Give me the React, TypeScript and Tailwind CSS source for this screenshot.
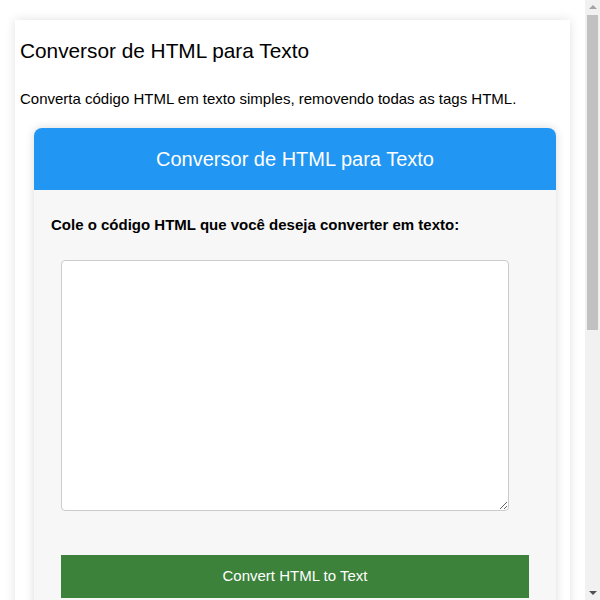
import { useState } from "react";

// Conversor de HTML para Texto — página simples com cartão e textarea.
function stripHtml(html: string) {
  const doc = new DOMParser().parseFromString(html, "text/html");
  return doc.body.textContent || "";
}

// barra de rolagem desenhada (o navegador headless esconde a nativa)
function FakeScrollbar() {
  return (
    <div className="fixed top-0 right-0 flex h-screen w-[15px] flex-col items-center bg-[#f1f1f1]">
      <div className="mt-[5px] h-0 w-0 border-x-[4px] border-b-[4px] border-x-transparent border-b-[#a3a3a3]" />
      <div className="mt-[6px] h-[315px] w-[11px] bg-[#c1c1c1]" />
      <div className="flex-1" />
      <div className="mb-[5px] h-0 w-0 border-x-[4px] border-t-[4px] border-x-transparent border-t-[#505050]" />
    </div>
  );
}

export default function App() {
  const [html, setHtml] = useState("");
  const [text, setText] = useState("");

  return (
    <div className="min-h-screen bg-white pt-[20px] pb-[25px] font-['Arial','Liberation_Sans',sans-serif] text-black">
      <div className="ml-[15px] w-[555px] bg-white pt-[19px] pb-[20px] shadow-[0_0_10px_rgba(0,0,0,0.12)]">
        <h1 className="pl-[5px] text-[20.8px] leading-[24px] font-normal">Conversor de HTML para Texto</h1>
        <p className="mt-[27px] pl-[5px] text-[15px] leading-[18px]">
          Converta código HTML em texto simples, removendo todas as tags HTML.
        </p>

        <div className="mt-[20px] ml-[19px] w-[522px] overflow-hidden rounded-[8px] bg-[#f7f7f7] shadow-[0_0_10px_rgba(0,0,0,0.15)]">
          <div className="flex h-[62px] items-center justify-center bg-[#2196F3] text-[20px] text-white">
            Conversor de HTML para Texto
          </div>

          <div className="px-[17px] pt-[26px] pb-[34px]">
            <label className="block text-[15px] leading-[18px] font-bold">
              Cole o código HTML que você deseja converter em texto:
            </label>
            <textarea
              value={html}
              onChange={e => setHtml(e.target.value)}
              className="mt-[26px] ml-[10px] block h-[251px] w-[448px] rounded-[4px] border border-[#ccc] bg-white p-[10px] text-[14px] outline-none"
            />
            <button
              onClick={() => setText(stripHtml(html))}
              className="mt-[44px] ml-[10px] block h-[43px] w-[468px] bg-[#3c823a] text-[15px] text-white"
            >
              Convert HTML to Text
            </button>

            <label className="mt-[26px] block text-[15px] leading-[18px] font-bold">Texto convertido:</label>
            <textarea
              readOnly
              value={text}
              className="mt-[26px] ml-[10px] block h-[251px] w-[448px] rounded-[4px] border border-[#ccc] bg-white p-[10px] text-[14px] outline-none"
            />
            <button
              onClick={() => navigator.clipboard?.writeText(text)}
              className="mt-[44px] ml-[10px] block h-[43px] w-[468px] bg-[#3c823a] text-[15px] text-white"
            >
              Copy Text
            </button>
          </div>
        </div>
      </div>
      <FakeScrollbar />
    </div>
  );
}
